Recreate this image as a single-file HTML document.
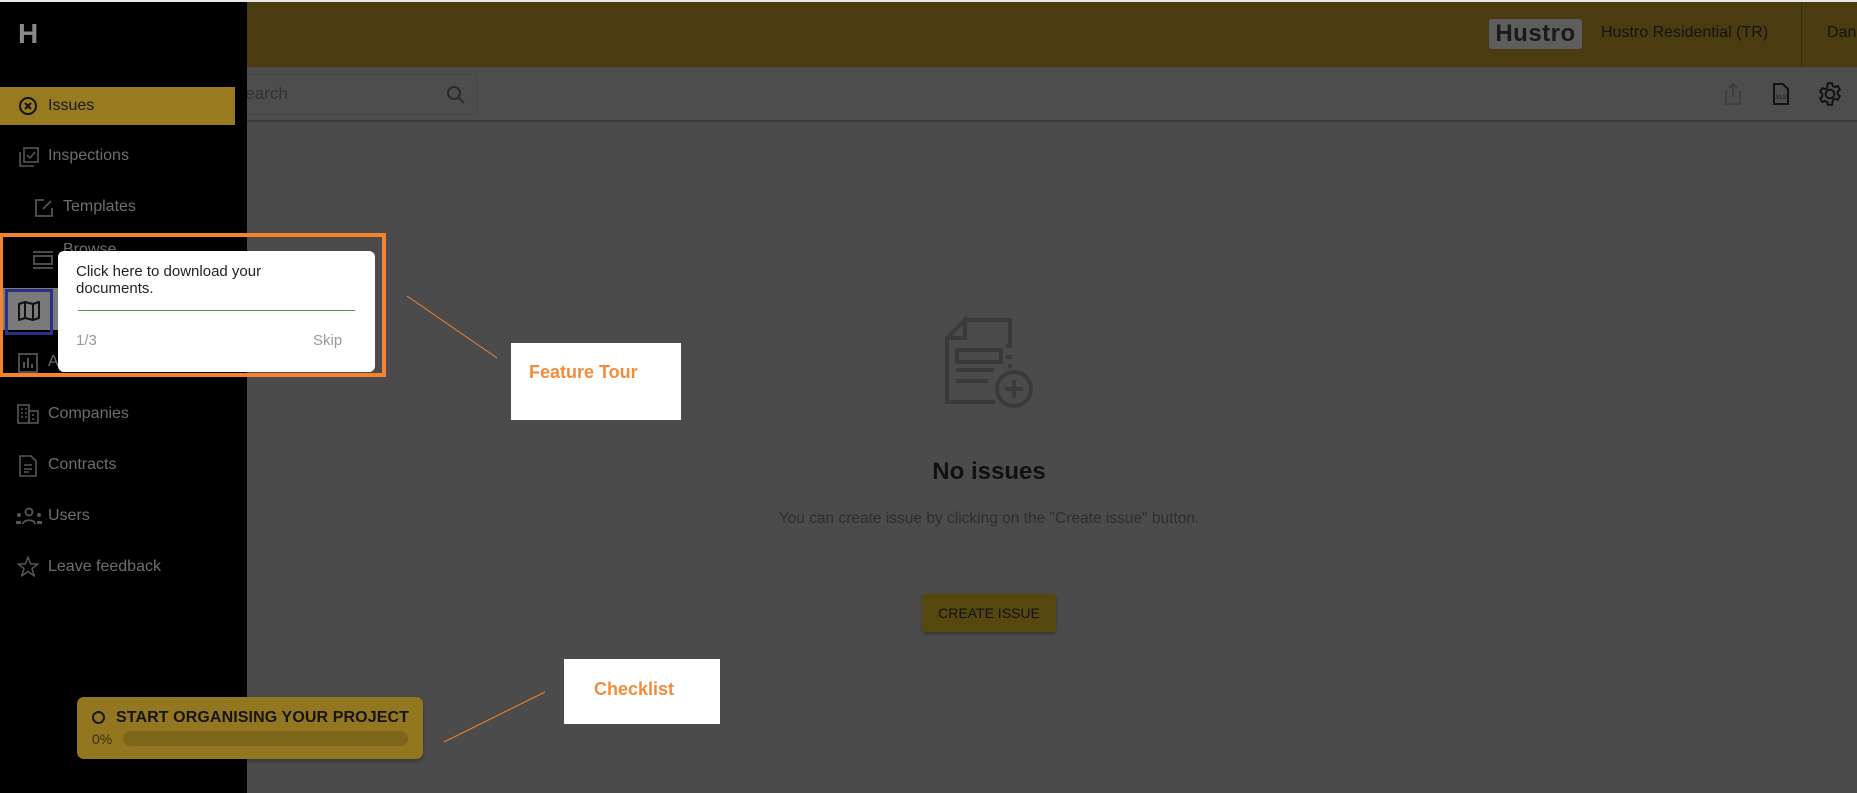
<!DOCTYPE html>
<html><head><meta charset="utf-8"><style>
*{margin:0;padding:0;box-sizing:border-box}
body{width:1857px;height:793px;overflow:hidden;background:#4b4b4b;font-family:"Liberation Sans",sans-serif;position:relative}
.a{position:absolute}
.nav{position:absolute;left:48px;font-size:16px;color:#6e6e6e;line-height:20px}
svg{position:absolute;overflow:visible}
</style></head><body>
<div class="a" style="left:0;top:0;width:1857px;height:2px;background:#e8e8e8"></div>
<div class="a" style="left:0;top:2px;width:1857px;height:65px;background:#4a3b10"></div>
<div class="a" style="left:0;top:67px;width:1857px;height:55px;background:#4d4d4d;border-bottom:2px solid #3c3c3c"></div>
<div class="a" style="left:230px;top:74px;width:247px;height:41px;border:1px solid #444;border-radius:3px"></div>
<div class="a" style="left:234px;top:84px;font-size:17px;color:#333">Search</div>
<svg style="left:446px;top:85px" width="20" height="20" viewBox="0 0 20 20"><circle cx="8" cy="8" r="6" fill="none" stroke="#2a2a2a" stroke-width="2"/><path d="M12.5 12.5L18 18" stroke="#2a2a2a" stroke-width="2.2"/></svg>
<!-- header right -->
<div class="a" style="left:1489px;top:19px;width:93px;height:30px;background:#5e5e5e;border-radius:3px;font-weight:bold;font-size:24px;color:#1a1a1a;line-height:30px;text-align:center;letter-spacing:0.5px">Hustro</div>
<div class="a" style="left:1601px;top:24px;font-size:16px;color:#141414">Hustro Residential (TR)</div>
<div class="a" style="left:1801px;top:2px;width:1px;height:65px;background:#3a2e0c"></div>
<div class="a" style="left:1827px;top:24px;font-size:16px;color:#141414">Dan</div>
<svg style="left:1724px;top:82px" width="18" height="24" viewBox="0 0 18 24"><path d="M9 2V15M5 6L9 2L13 6M4 10H2V22H16V10H14" fill="none" stroke="#3c3c3c" stroke-width="1.6"/></svg>
<svg style="left:1772px;top:82px" width="18" height="24" viewBox="0 0 18 24"><path d="M2 2H11L16 7V22H2Z" fill="none" stroke="#111" stroke-width="2"/><text x="9" y="17" font-size="6" text-anchor="middle" fill="#111" font-family="Liberation Sans">XLS</text></svg>
<svg style="left:1817px;top:81px" width="26" height="26" viewBox="0 0 24 24"><path d="M12 8a4 4 0 1 0 0 8a4 4 0 1 0 0-8zM10 2h4l.6 2.6 2 1 2.5-1 2 3.4-2 1.8v2.4l2 1.8-2 3.4-2.5-1-2 1L14 22h-4l-.6-2.6-2-1-2.5 1-2-3.4 2-1.8v-2.4l-2-1.8 2-3.4 2.5 1 2-1z" fill="none" stroke="#111" stroke-width="1.8"/></svg>
<!-- sidebar -->
<div class="a" style="left:0;top:2px;width:247px;height:791px;background:#000"></div>
<div class="a" style="left:18px;top:18px;font-size:28px;font-weight:bold;color:#8a8a8a">H</div>
<div class="a" style="left:0;top:87px;width:235px;height:38px;background:#987a1f"></div>
<svg style="left:18px;top:96px" width="20" height="20" viewBox="0 0 20 20"><circle cx="10" cy="10" r="8" fill="none" stroke="#111" stroke-width="2"/><path d="M7 7L13 13M13 7L7 13" stroke="#111" stroke-width="2"/></svg>
<div class="nav" style="top:96px;color:#1a1a1a">Issues</div>
<svg style="left:19px;top:147px" width="20" height="20" viewBox="0 0 20 20"><path d="M1 5V19H15" fill="none" stroke="#555" stroke-width="1.6"/><rect x="5" y="1" width="14" height="14" fill="none" stroke="#555" stroke-width="1.6"/><path d="M8 8L11 11L16 5" fill="none" stroke="#555" stroke-width="1.6"/></svg>
<div class="nav" style="top:146px">Inspections</div>
<svg style="left:34px;top:198px" width="20" height="20" viewBox="0 0 20 20"><path d="M10 2H2V18H18V10" fill="none" stroke="#555" stroke-width="1.8"/><path d="M9 11L17 3" stroke="#555" stroke-width="1.8"/></svg>
<div class="nav" style="left:63px;top:197px">Templates</div>
<svg style="left:32px;top:250px" width="22" height="20" viewBox="0 0 22 20"><path d="M1 2H21M1 18H21" stroke="#555" stroke-width="1.8"/><rect x="2" y="6" width="18" height="8" fill="none" stroke="#555" stroke-width="1.8"/></svg>
<div class="nav" style="left:63px;top:240px;height:16px;overflow:hidden">Browse</div>
<div class="a" style="left:0;top:288px;width:70px;height:42px;background:#7a7a7a"></div>
<div class="a" style="left:5px;top:289px;width:48px;height:46px;border:3px solid #2a2f88"></div>
<svg style="left:17px;top:300px" width="24" height="22" viewBox="0 0 24 22"><path d="M2 4L8 2L16 4L22 2V18L16 20L8 18L2 20ZM8 2V18M16 4V20" fill="none" stroke="#111" stroke-width="2" stroke-linejoin="round"/></svg>
<svg style="left:18px;top:353px" width="20" height="20" viewBox="0 0 20 20"><rect x="1" y="1" width="18" height="18" fill="none" stroke="#555" stroke-width="1.8"/><path d="M6 15V9M10 15V5M14 15V11" stroke="#555" stroke-width="2"/></svg>
<div class="nav" style="top:352px">Analytics</div>
<svg style="left:17px;top:404px" width="22" height="20" viewBox="0 0 22 20"><rect x="1" y="1" width="11" height="18" fill="none" stroke="#555" stroke-width="1.6"/><rect x="12" y="7" width="9" height="12" fill="none" stroke="#555" stroke-width="1.6"/><path d="M4 5h2M8 5h2M4 9h2M8 9h2M4 13h2M8 13h2M15 11h2M15 15h2" stroke="#555" stroke-width="1.6"/></svg>
<div class="nav" style="top:404px">Companies</div>
<svg style="left:18px;top:455px" width="20" height="22" viewBox="0 0 20 22"><path d="M2 1H13L18 6V21H2Z" fill="none" stroke="#555" stroke-width="1.6"/><path d="M6 10H14M6 14H14M6 17H11" stroke="#555" stroke-width="1.6"/></svg>
<div class="nav" style="top:455px">Contracts</div>
<svg style="left:15px;top:506px" width="28" height="20" viewBox="0 0 28 20"><circle cx="14" cy="6" r="3.5" fill="none" stroke="#555" stroke-width="1.8"/><path d="M8 18C8 13 20 13 20 18" fill="none" stroke="#555" stroke-width="1.8"/><circle cx="4" cy="9" r="2" fill="#555"/><circle cx="24" cy="9" r="2" fill="#555"/><path d="M1 18V15H6V18M22 18V15H27V18" fill="#555"/></svg>
<div class="nav" style="top:506px">Users</div>
<svg style="left:17px;top:556px" width="22" height="22" viewBox="0 0 22 22"><path d="M11 1L13.6 8H21L15 12.5L17.3 20L11 15.5L4.7 20L7 12.5L1 8H8.4Z" fill="none" stroke="#555" stroke-width="1.5" stroke-linejoin="round"/></svg>
<div class="nav" style="top:557px">Leave feedback</div>
<!-- feature tour -->
<div class="a" style="left:0;top:233px;width:386px;height:144px;border:4px solid #f5822c;border-left-width:3px"></div>
<div class="a" style="left:58px;top:251px;width:317px;height:121px;background:#fff;border-radius:6px"></div>
<div class="a" style="left:76px;top:263px;font-size:15px;line-height:17px;color:#222">Click here to download your<br>documents.</div>
<div class="a" style="left:78px;top:310px;width:277px;height:1px;background:#3d9a4a"></div>
<div class="a" style="left:76px;top:332px;font-size:15px;color:#999">1/3</div>
<div class="a" style="left:313px;top:332px;font-size:15px;color:#999">Skip</div>
<svg style="left:0;top:0" width="1857" height="793"><path d="M407 296L497 358" stroke="#f5822c" stroke-width="1"/><path d="M444 742L545 692" stroke="#f5822c" stroke-width="1"/></svg>
<div class="a" style="left:511px;top:343px;width:170px;height:77px;background:#fff"></div>
<div class="a" style="left:529px;top:362px;font-size:18px;font-weight:bold;color:#f28c3c">Feature Tour</div>
<div class="a" style="left:564px;top:659px;width:156px;height:65px;background:#fff"></div>
<div class="a" style="left:594px;top:679px;font-size:18px;font-weight:bold;color:#f28c3c">Checklist</div>
<!-- empty state -->
<svg style="left:945px;top:318px" width="90" height="92" viewBox="0 0 90 92"><path d="M20 2H65V30M65 46V50M2 20L20 2V20H2V84H50" fill="none" stroke="#3a3a3a" stroke-width="4"/><rect x="12" y="32" width="44" height="12" fill="none" stroke="#3a3a3a" stroke-width="4"/><path d="M61 28H67M61 39H67M11 52H49M11 63H43" stroke="#3a3a3a" stroke-width="4"/><circle cx="69" cy="71" r="17" fill="none" stroke="#3a3a3a" stroke-width="4"/><path d="M69 62V80M60 71H78" stroke="#3a3a3a" stroke-width="4"/></svg>
<div class="a" style="left:889px;top:458px;width:200px;text-align:center;font-size:24px;font-weight:bold;color:#111">No issues</div>
<div class="a" style="left:689px;top:510px;width:600px;text-align:center;font-size:15.5px;color:#2e2e2e">You can create issue by clicking on the "Create issue" button.</div>
<div class="a" style="left:922px;top:594px;width:134px;height:38px;background:#56470f;border-radius:3px;box-shadow:0 2px 3px rgba(0,0,0,.3);font-size:14px;color:#111;text-align:center;line-height:38px">CREATE ISSUE</div>
<!-- checklist widget -->
<div class="a" style="left:77px;top:697px;width:346px;height:62px;background:#927620;border-radius:7px;box-shadow:0 2px 4px rgba(0,0,0,.3)"></div>
<div class="a" style="left:92px;top:711px;width:13px;height:13px;border:2px solid #1a1a1a;border-radius:50%"></div>
<div class="a" style="left:116px;top:709px;font-size:16px;font-weight:bold;color:#141414;letter-spacing:0.1px">START ORGANISING YOUR PROJECT</div>
<div class="a" style="left:92px;top:731px;font-size:14px;color:#3a2f0c">0%</div>
<div class="a" style="left:123px;top:731px;width:285px;height:15px;background:#7d6519;border-radius:8px"></div>
</body></html>
